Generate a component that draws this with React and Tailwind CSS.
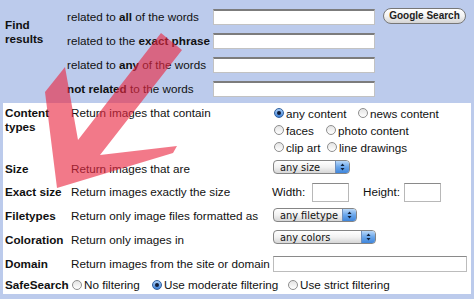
import React from "react";

function Radio({ checked }) {
  return checked ? (
    <span className="inline-flex w-[10px] h-[10px] shrink-0 items-center justify-center rounded-full border border-[#2f5f9e] bg-gradient-to-b from-[#a8cdf6] to-[#3f82d6]">
      <span className="w-[4px] h-[4px] rounded-full bg-[#0f1d3a]" />
    </span>
  ) : (
    <span className="inline-block w-[10px] h-[10px] shrink-0 rounded-full border border-[#8e8e8e] bg-gradient-to-b from-[#e4e4e4] to-white" />
  );
}

function RadioItem({ checked, label, className }) {
  return (
    <span className={"flex items-center gap-[2px] " + (className || "")}>
      <Radio checked={checked} />
      <span className="text-[11.7px] leading-none whitespace-nowrap">{label}</span>
    </span>
  );
}

function Select({ label, className, mb }) {
  return (
    <div
      className={
        "flex h-[14px] rounded-[4px] border border-[#858585] bg-gradient-to-b from-white via-[#f2f2f2] to-[#d6d6d6] overflow-hidden " +
        className +
        " " +
        (mb || "")
      }
    >
      <span className="flex-1 pl-[6px] text-[9.8px] leading-[13px] text-[#111] font-['DejaVu_Sans',sans-serif] whitespace-nowrap">
        {label}
      </span>
      <span className="flex w-[14px] items-center justify-center border-l border-[#6f8fbd] bg-gradient-to-b from-[#b9d8f8] via-[#6aa6ea] to-[#3f86db]">
        <svg width="5" height="8" viewBox="0 0 5 8">
          <path d="M2.5 0.5 L4.5 3 L0.5 3 Z" fill="#10203a" />
          <path d="M0.5 5 L4.5 5 L2.5 7.5 Z" fill="#10203a" />
        </svg>
      </span>
    </div>
  );
}

function TopInput() {
  return (
    <div className="w-[162px] h-[16px] bg-white border border-[#c2c2c2] border-t-[#7c7c7c] border-t-2" />
  );
}

function Row({ h, label, text, children, items = "items-center" }) {
  return (
    <div className={"flex " + h + " " + items}>
      <div className="w-[68px] pl-[2px] font-bold leading-[14px] whitespace-nowrap">{label}</div>
      <div className="w-[202px] leading-[14px] whitespace-nowrap">{text}</div>
      <div className="flex items-center">{children}</div>
    </div>
  );
}

export default function App() {
  const topRows = [
    <>related to <b>all</b> of the words</>,
    <>related to the <b>exact phrase</b></>,
    <>related to <b>any</b> of the words</>,
    <><b>not related</b> to the words</>,
  ];
  return (
    <div className="relative w-[474px] h-[299px] overflow-hidden bg-[#bccbec] text-[11.7px] text-[#111] font-['Liberation_Sans',Arial,sans-serif]">
      {/* top section */}
      <div className="flex h-[103px] pt-[5px]">
        <div className="w-[67px] pl-[5px] pt-[13px] font-bold leading-[14px]">
          Find
          <br />
          results
        </div>
        <div className="flex flex-col">
          {topRows.map((r, i) => (
            <div key={i} className="flex h-[24px] items-center">
              <div className="w-[146px] whitespace-nowrap">{r}</div>
              <TopInput />
            </div>
          ))}
        </div>
        <div className="ml-[8px] mt-[3px]">
          <div className="flex w-[83px] h-[16px] items-center justify-center rounded-full border border-[#777] bg-gradient-to-b from-white via-[#f3f3f3] to-[#d4d4d4] text-[10px] font-bold text-[#222] leading-none">
            Google Search
          </div>
        </div>
      </div>

      {/* white panel */}
      <div className="mx-[3px] h-[191px] bg-white">
        <Row h="h-[54px] pt-[3px]" items="items-start" label={<>Content<br />types</>} text="Return images that contain">
          <div className="flex flex-col -mt-[1px] ml-[1px]">
            <div className="flex h-[17px] items-center">
              <RadioItem checked label="any content" className="w-[84px]" />
              <RadioItem label="news content" />
            </div>
            <div className="flex h-[17px] items-center">
              <RadioItem label="faces" className="w-[52px]" />
              <RadioItem label="photo content" />
            </div>
            <div className="flex h-[17px] items-center">
              <RadioItem label="clip art" className="w-[53px]" />
              <RadioItem label="line drawings" />
            </div>
          </div>
        </Row>
        <Row h="h-[23px]" label="Size" text="Return images that are">
          <Select label="any size" className="w-[77px]" mb="mb-[4px]" />
        </Row>
        <Row h="h-[24px]" label="Exact size" text="Return images exactly the size">
          <span className="-ml-[1px] w-[40px]">Width:</span>
          <div className="w-[37px] h-[19px] border border-[#b8b8b8] border-t-[#8a8a8a]" />
          <span className="ml-[14px] w-[41px]">Height:</span>
          <div className="w-[37px] h-[19px] border border-[#b8b8b8] border-t-[#8a8a8a]" />
        </Row>
        <Row h="h-[24px]" label="Filetypes" text="Return only image files formatted as">
          <Select label="any filetype" className="w-[84px]" mb="mb-[3px]" />
        </Row>
        <Row h="h-[23px]" label="Coloration" text="Return only images in">
          <Select label="any colors" className="w-[103px]" mb="mb-[5px]" />
        </Row>
        <Row h="h-[25px]" label="Domain" text="Return images from the site or domain">
          <div className="w-[194px] h-[16px] border border-[#bcbcbc] border-t-[#8a8a8a]" />
        </Row>
        <div className="flex h-[18px] items-center">
          <div className="w-[69px] pl-[2px] font-bold whitespace-nowrap">SafeSearch</div>
          <RadioItem label="No filtering" className="w-[80px]" />
          <RadioItem checked label="Use moderate filtering" className="w-[136px]" />
          <RadioItem label="Use strict filtering" />
        </div>
      </div>

      {/* red arrow overlay */}
      <svg
        className="absolute left-0 top-0 pointer-events-none"
        width="474"
        height="299"
        viewBox="0 0 474 299"
      >
        <polygon
          points="57,188 45,92 65,67 78,140 161,33 182,50 100,155 177,146 173,153"
          fill="rgb(234,38,64)"
          fillOpacity="0.62"
        />
      </svg>
    </div>
  );
}
